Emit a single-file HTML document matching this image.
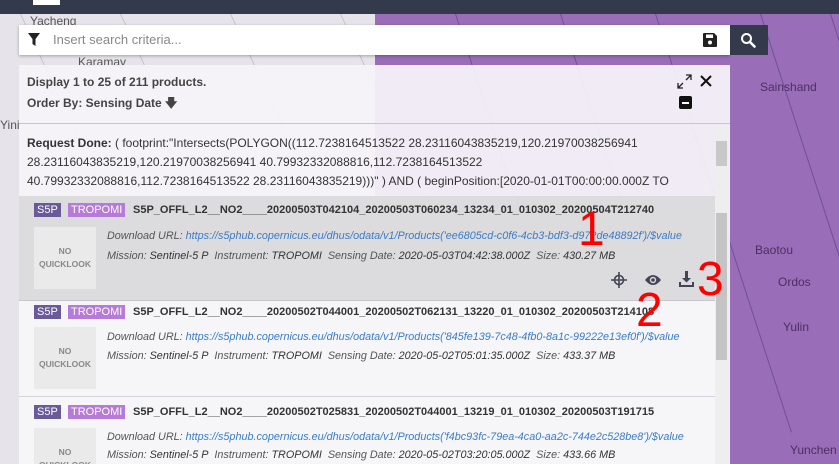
<!DOCTYPE html>
<html><head><meta charset="utf-8"><style>
*{margin:0;padding:0;box-sizing:border-box}
html,body{width:839px;height:464px;overflow:hidden}
body{position:relative;font-family:"Liberation Sans",sans-serif;background:#e6e4ea}
.abs{position:absolute}
.map-r{left:375px;top:0;width:464px;height:464px;background:#9a6db8}
.top{left:0;top:0;width:839px;height:14px;background:#333a4c}
.line{position:absolute;width:1px;background:#4a3a7a;opacity:.55;transform-origin:top left}
.lline{position:absolute;width:1px;background:#b8b4c8;opacity:.7;transform-origin:top left}
.search{left:19px;top:25px;width:711px;height:30px;background:#fff;box-shadow:0 1px 3px rgba(0,0,0,.3)}
.sbtn{left:730px;top:25px;width:38px;height:30px;background:#343a4b}
.panel{left:19px;top:65px;width:711px;height:399px;background:rgba(246,244,249,.93)}
.t{position:absolute;white-space:nowrap;color:#333}
.badge{position:absolute;height:14px;font-size:11px;line-height:14px;color:#fff;padding:0 3px}
.item{position:absolute;left:19px;width:696px}
.thumb{position:absolute;left:15px;width:62px;height:62px;background:#eaeaea;color:#888;font-size:8.5px;font-weight:bold;text-align:center;line-height:13px;padding-top:18px;overflow:hidden}
.it{font-style:italic;font-size:10.8px;color:#555}
.it b{font-weight:normal;color:#333}
.it a{color:#3a7cc8;text-decoration:none}
.red{position:absolute;color:#f00;font-size:48px;font-family:"Liberation Sans",sans-serif}
.sb{position:absolute;background:#ddd}
#clip{position:absolute;left:0;top:0;width:839px;height:464px;overflow:hidden}
</style></head><body><div id="clip">
<div class="abs map-r"></div>
<div class="line" style="left:455px;top:14px;height:440px;transform:rotate(-18deg)"></div>
<div class="line" style="left:560px;top:14px;height:440px;transform:rotate(-18deg)"></div>
<div class="line" style="left:655px;top:14px;height:440px;transform:rotate(-18deg)"></div>
<div class="line" style="left:760px;top:14px;height:440px;transform:rotate(-18deg)"></div>
<div class="line" style="left:830px;top:14px;height:440px;transform:rotate(-18deg)"></div>
<div class="lline" style="left:20px;top:14px;height:200px;transform:rotate(-25deg)"></div>
<div class="lline" style="left:120px;top:14px;height:440px;transform:rotate(-25deg)"></div>
<div class="lline" style="left:230px;top:14px;height:440px;transform:rotate(-25deg)"></div>
<div class="lline" style="left:340px;top:14px;height:440px;transform:rotate(-25deg)"></div>
<div class="t" style="left:30px;top:14px;font-size:12px;color:#555">Yacheng</div>
<div class="t" style="left:78px;top:55px;font-size:12px;color:#555">Karamay</div>
<div class="t" style="left:0;top:118px;font-size:12px;color:#555">Yini</div>
<div class="t" style="left:760px;top:80px;font-size:12px;color:#4a3060">Sainshand</div>
<div class="t" style="left:755px;top:243px;font-size:12px;color:#4a3060">Baotou</div>
<div class="t" style="left:778px;top:275px;font-size:12px;color:#4a3060">Ordos</div>
<div class="t" style="left:783px;top:320px;font-size:12px;color:#4a3060">Yulin</div>
<div class="t" style="left:790px;top:443px;font-size:12px;color:#4a3060">Yunchen</div>
<div class="abs top"></div>
<div class="abs" style="left:33px;top:0;width:27px;height:5px;background:#fff"></div>
<div class="abs search"></div>
<svg class="abs" style="left:28px;top:33px" width="12" height="14" viewBox="0 0 12 14"><path d="M0 0H12L7.5 6V13L4.5 11V6Z" fill="#222"/></svg>
<div class="t" style="left:53px;top:32px;font-size:13px;color:#888">Insert search criteria...</div>
<svg class="abs" style="left:702px;top:32px" width="16" height="16" viewBox="0 0 16 16"><path d="M1 2Q1 1 2 1H12L15 4V14Q15 15 14 15H2Q1 15 1 14Z" fill="#222"/><rect x="4" y="2.5" width="7" height="3.5" fill="#fff"/><circle cx="8" cy="10.5" r="2" fill="#fff"/></svg>
<div class="abs sbtn"></div>
<svg class="abs" style="left:740px;top:32px" width="16" height="16" viewBox="0 0 16 16"><circle cx="6.5" cy="6.5" r="4.5" fill="none" stroke="#fff" stroke-width="2"/><path d="M10 10L14.5 14.5" stroke="#fff" stroke-width="2.6" stroke-linecap="round"/></svg>
<div class="abs panel"></div>
<div class="t" style="left:27px;top:75px;font-size:12px;font-weight:bold;color:#444">Display 1 to 25 of 211 products.</div>
<div class="t" style="left:27px;top:94px;font-size:12px;font-weight:bold;color:#444">Order By: Sensing Date <span style="font-size:12px">&#129095;</span></div>
<svg class="abs" style="left:677px;top:74px" width="15" height="15" viewBox="0 0 15 15"><path d="M9 1H14V6M14 1L9 6M1 9V14H6M1 14L6 9" fill="none" stroke="#222" stroke-width="1.3"/></svg>
<svg class="abs" style="left:699px;top:74px" width="14" height="14" viewBox="0 0 14 14"><path d="M2 2L12 12M12 2L2 12" stroke="#111" stroke-width="2"/></svg>
<div class="abs" style="left:679px;top:96px;width:13px;height:13px;background:#111;border-radius:2px"><div style="margin:5.5px 3px;height:2px;background:#fff"></div></div>
<div class="abs" style="left:19px;top:123px;width:711px;height:1px;background:#c9c2d4"></div>
<div class="t" style="left:27px;top:134px;font-size:12px;line-height:19px;color:#333;height:61px;overflow:hidden"><b>Request Done:</b> ( footprint:"Intersects(POLYGON((112.7238164513522 28.23116043835219,120.21970038256941<br>28.23116043835219,120.21970038256941 40.79932332088816,112.7238164513522<br>40.79932332088816,112.7238164513522 28.23116043835219)))" ) AND ( beginPosition:[2020-01-01T00:00:00.000Z TO<br>2020-05-03T23:59:59.999Z] AND endPosition:[2020-01-01T00:00:00.000Z TO 2020-05-03T23:59:59.999Z] ) AND (</div>
<div class="sb" style="left:715px;top:128px;width:13px;height:67px;background:#eee"></div>
<div class="sb" style="left:716px;top:141px;width:11px;height:25px;background:#c8c8c8"></div>
<div class="abs" style="left:19px;top:196px;width:696px;height:268px;background:#f6f5f8"></div>
<div class="item" style="top:196px;height:104px;background:#dcdbdd"></div>
<div class="item" style="top:300px;height:1px;background:#c9c7cc"></div>
<div class="item" style="top:396px;height:1px;background:#d6d4da"></div>
<div class="sb" style="left:715px;top:196px;width:13px;height:268px;background:#eee"></div>
<div class="sb" style="left:716px;top:213px;width:11px;height:147px;background:#c4c4c4"></div>

<div class="badge" style="left:34px;top:203px;background:#6a5a9a">S5P</div>
<div class="badge" style="left:68px;top:203px;background:#b67ad8">TROPOMI</div>
<div class="t" style="left:133px;top:204px;font-size:11px;font-weight:bold;color:#333">S5P_OFFL_L2__NO2____20200503T042104_20200503T060234_13234_01_010302_20200504T212740</div>
<div class="thumb" style="left:34px;top:227px">NO<br>QUICKLOOK</div>
<div class="t it" style="left:107px;top:230px">Download URL: <a>https://s5phub.copernicus.eu/dhus/odata/v1/Products('ee6805cd-c0f6-4cb3-bdf3-d97?de48892f')/$value</a></div>
<div class="t it" style="left:107px;top:250px">Mission: <b>Sentinel-5 P</b>&nbsp; Instrument: <b>TROPOMI</b>&nbsp; Sensing Date: <b>2020-05-03T04:42:38.000Z</b>&nbsp; Size: <b>430.27 MB</b></div>
<svg class="abs" style="left:611px;top:272px" width="16" height="16" viewBox="0 0 16 16"><circle cx="8" cy="8" r="4.5" fill="none" stroke="#445" stroke-width="1.6"/><path d="M8 0V16M0 8H16" stroke="#445" stroke-width="1.6"/></svg>
<svg class="abs" style="left:644px;top:273px" width="18" height="14" viewBox="0 0 18 14"><path d="M1 7Q9 -3 17 7Q9 17 1 7Z" fill="#445"/><circle cx="9" cy="7" r="3.2" fill="#ddd"/><circle cx="9" cy="7" r="1.8" fill="#445"/></svg>
<svg class="abs" style="left:679px;top:271px" width="15" height="16" viewBox="0 0 15 16"><path d="M6 0H9V7H12L7.5 11.5L3 7H6Z" fill="#445"/><path d="M1 11V15H14V11" fill="none" stroke="#445" stroke-width="2"/></svg>

<div class="badge" style="left:34px;top:305px;background:#6a5a9a">S5P</div>
<div class="badge" style="left:68px;top:305px;background:#b67ad8">TROPOMI</div>
<div class="t" style="left:133px;top:306px;font-size:11px;font-weight:bold;color:#333">S5P_OFFL_L2__NO2____20200502T044001_20200502T062131_13220_01_010302_20200503T214108</div>
<div class="thumb" style="left:34px;top:327px">NO<br>QUICKLOOK</div>
<div class="t it" style="left:107px;top:331px">Download URL: <a>https://s5phub.copernicus.eu/dhus/odata/v1/Products('845fe139-7c48-4fb0-8a1c-99222e13ef0f')/$value</a></div>
<div class="t it" style="left:107px;top:350px">Mission: <b>Sentinel-5 P</b>&nbsp; Instrument: <b>TROPOMI</b>&nbsp; Sensing Date: <b>2020-05-02T05:01:35.000Z</b>&nbsp; Size: <b>433.37 MB</b></div>

<div class="badge" style="left:34px;top:405px;background:#6a5a9a">S5P</div>
<div class="badge" style="left:68px;top:405px;background:#b67ad8">TROPOMI</div>
<div class="t" style="left:133px;top:406px;font-size:11px;font-weight:bold;color:#333">S5P_OFFL_L2__NO2____20200502T025831_20200502T044001_13219_01_010302_20200503T191715</div>
<div class="thumb" style="left:34px;top:428px;height:36px">NO<br>QUICKLOOK</div>
<div class="t it" style="left:107px;top:431px">Download URL: <a>https://s5phub.copernicus.eu/dhus/odata/v1/Products('f4bc93fc-79ea-4ca0-aa2c-744e2c528be8')/$value</a></div>
<div class="t it" style="left:107px;top:449px">Mission: <b>Sentinel-5 P</b>&nbsp; Instrument: <b>TROPOMI</b>&nbsp; Sensing Date: <b>2020-05-02T03:20:05.000Z</b>&nbsp; Size: <b>433.66 MB</b></div>

<div class="red" style="left:578px;top:202px">1</div>
<div class="red" style="left:636px;top:283px">2</div>
<div class="red" style="left:697px;top:252px">3</div>
</div></body></html>
